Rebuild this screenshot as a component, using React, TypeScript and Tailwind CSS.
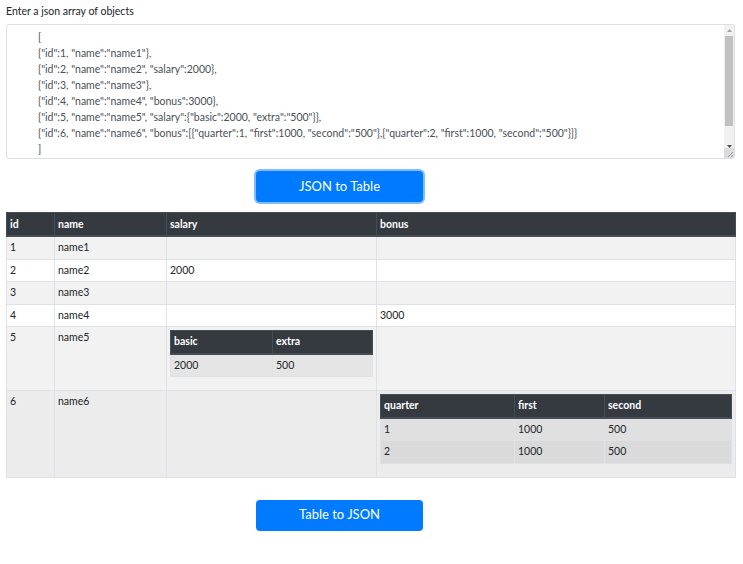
import { useState } from 'react';

const sample = `[
{"id":1, "name":"name1"},
{"id":2, "name":"name2", "salary":2000},
{"id":3, "name":"name3"},
{"id":4, "name":"name4", "bonus":3000},
{"id":5, "name":"name5", "salary":{"basic":2000, "extra":"500"}},
{"id":6, "name":"name6", "bonus":[{"quarter":1, "first":1000, "second":"500"},{"quarter":2, "first":1000, "second":"500"}]}
]
`;

const th = 'px-[3px] py-[3px] text-left font-bold text-white leading-[16px] border border-[#454d55] border-b-2';
const subTh = 'px-[3px] py-[3px] text-left font-bold text-white leading-[15.5px] border border-[#454d55] border-b-2';
const td = 'px-[3px] py-[3px] align-top leading-[15.5px] border border-[#dee2e6]';

function SalaryTable() {
  return (
    <table className="w-full mb-[10px]">
      <thead className="bg-[#343a40]">
        <tr>
          <th className={subTh}>basic</th>
          <th className={subTh}>extra</th>
        </tr>
      </thead>
      <tbody>
        <tr className="bg-black/5">
          <td className={td + ' w-[102px]'}>2000</td>
          <td className={td}>500</td>
        </tr>
      </tbody>
    </table>
  );
}

function BonusTable() {
  return (
    <table className="w-full mb-[10px]">
      <thead className="bg-[#343a40]">
        <tr>
          <th className={subTh + ' w-[134px]'}>quarter</th>
          <th className={subTh + ' w-[90px]'}>first</th>
          <th className={subTh}>second</th>
        </tr>
      </thead>
      <tbody>
        <tr className="bg-black/5">
          <td className={td}>1</td>
          <td className={td}>1000</td>
          <td className={td}>500</td>
        </tr>
        <tr className="bg-black/[0.075]">
          <td className={td}>2</td>
          <td className={td}>1000</td>
          <td className={td}>500</td>
        </tr>
      </tbody>
    </table>
  );
}

// drawn scrollbar, headless browser hides the native one
function FakeScrollbar() {
  return (
    <div className="pointer-events-none absolute right-[1px] top-[1px] bottom-[1px] w-[10px] flex flex-col bg-[#f1f1f1]">
      <div className="h-[11px] flex items-center justify-center">
        <svg width="5" height="3" viewBox="0 0 5 3">
          <path d="M0 3 L2.5 0 L5 3 Z" fill="#a3a3a3" />
        </svg>
      </div>
      <div className="h-[90px] mx-[1px] bg-[#c1c1c1]" />
      <div className="flex-1 flex items-center justify-center">
        <svg width="5" height="3" viewBox="0 0 5 3" className="mt-[18px]">
          <path d="M0 0 L2.5 3 L5 0 Z" fill="#505050" />
        </svg>
      </div>
      <div className="h-[10px] bg-[#dcdcdc] flex items-end justify-end">
        <svg width="8" height="8" viewBox="0 0 8 8">
          <path d="M7 2 L2 7 M7 5 L5 7" stroke="#9a9a9a" strokeWidth="1" />
        </svg>
      </div>
    </div>
  );
}

export default function App() {
  const [json, setJson] = useState(sample);

  return (
    <div className="min-h-[564px] bg-white px-[6px] pt-[3px] text-[10.5px] text-[#212529] font-['Lato','Liberation_Sans',sans-serif]">
      <label className="block leading-[16px] mb-[5px]">Enter a json array of objects</label>
      <div className="relative w-[729px]">
        <textarea
          value={json}
          onChange={(e) => setJson(e.target.value)}
          spellCheck={false}
          className="block w-[729px] h-[135px] border border-[#dcdfe3] rounded-[3px] pl-[31px] pr-[18px] py-[4px] leading-[16px] text-[#495057] overflow-y-scroll resize-none outline-none [scrollbar-width:none]"
        />
        <FakeScrollbar />
      </div>

      <button className="block ml-[250px] mt-[12px] w-[167px] h-[31px] rounded-[4px] bg-[#007bff] text-white text-[13px] shadow-[0_0_0_2px_rgba(0,123,255,0.5)]">
        JSON to Table
      </button>

      <table className="mt-[10px] w-[730px] table-fixed">
        <thead className="bg-[#343a40]">
          <tr>
            <th className={th + ' w-[48px]'}>id</th>
            <th className={th + ' w-[112px]'}>name</th>
            <th className={th + ' w-[210px]'}>salary</th>
            <th className={th}>bonus</th>
          </tr>
        </thead>
        <tbody>
          <tr className="bg-black/5">
            <td className={td}>1</td>
            <td className={td}>name1</td>
            <td className={td}></td>
            <td className={td}></td>
          </tr>
          <tr>
            <td className={td}>2</td>
            <td className={td}>name2</td>
            <td className={td}>2000</td>
            <td className={td}></td>
          </tr>
          <tr className="bg-black/5">
            <td className={td}>3</td>
            <td className={td}>name3</td>
            <td className={td}></td>
            <td className={td}></td>
          </tr>
          <tr>
            <td className={td}>4</td>
            <td className={td}>name4</td>
            <td className={td}></td>
            <td className={td}>3000</td>
          </tr>
          <tr className="bg-black/5">
            <td className={td}>5</td>
            <td className={td}>name5</td>
            <td className={td}>
              <SalaryTable />
            </td>
            <td className={td}></td>
          </tr>
          <tr className="bg-black/[0.075]">
            <td className={td}>6</td>
            <td className={td}>name6</td>
            <td className={td}></td>
            <td className={td}>
              <BonusTable />
            </td>
          </tr>
        </tbody>
      </table>

      <button className="block ml-[250px] mt-[22px] w-[167px] h-[31px] rounded-[4px] bg-[#007bff] text-white text-[13px]">
        Table to JSON
      </button>
    </div>
  );
}
